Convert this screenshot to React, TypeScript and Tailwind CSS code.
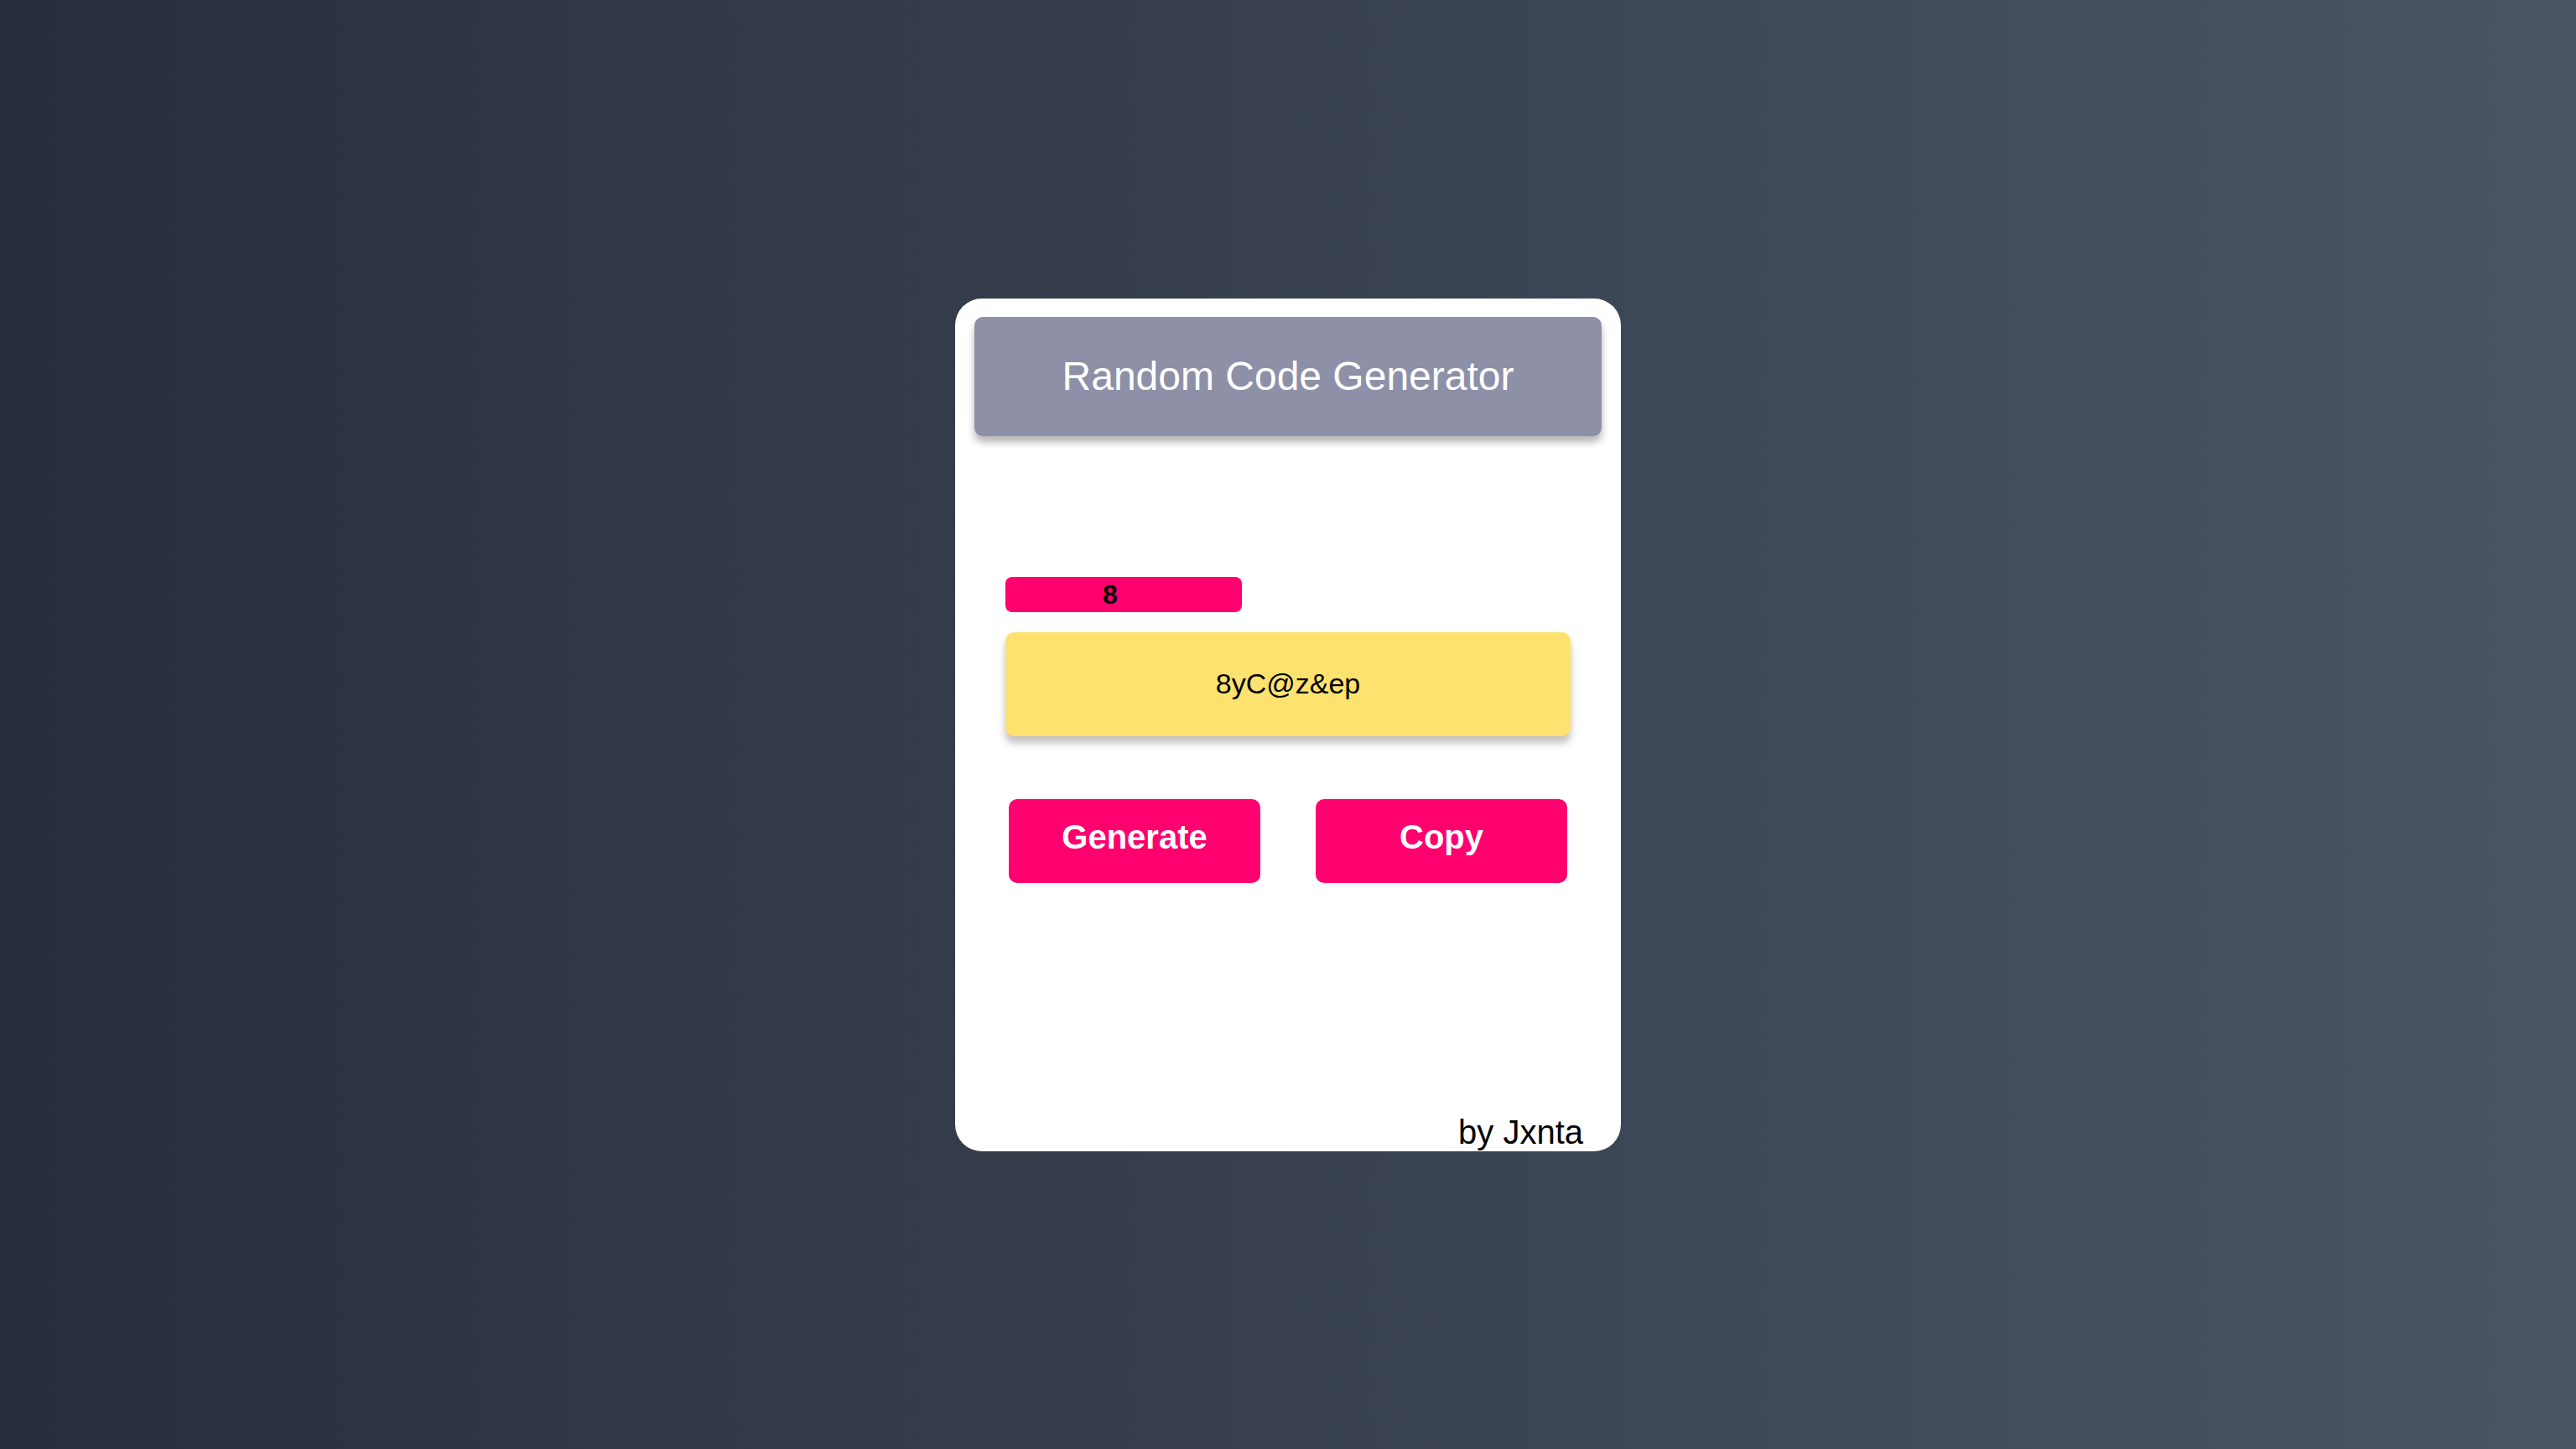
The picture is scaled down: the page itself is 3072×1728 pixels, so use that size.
import React, { useState } from 'react';

const CHARS = 'ABCDEFGHIJKLMNOPQRSTUVWXYZabcdefghijklmnopqrstuvwxyz0123456789!@#$%^&*';

const makeCode = (len: number) => {
  let out = '';
  for (let i = 0; i < len; i++) out += CHARS[Math.floor(Math.random() * CHARS.length)];
  return out;
};

const App = () => {
  const [length] = useState(8);
  const [code, setCode] = useState('8yC@z&ep');

  return (
    <div className="flex h-[1728px] w-full items-center justify-center bg-gradient-to-r from-[#282e3b] to-[#4a5566] font-['Liberation_Sans',Arial,sans-serif]">
      <div className="flex h-[1017px] w-[794px] flex-col rounded-[32px] bg-white pt-[22px]">
        {/* header */}
        <div className="mx-[23px] flex h-[142px] items-center justify-center rounded-[10px] bg-[#8e90a7] shadow-[0_7px_10px_rgba(0,0,0,0.3)]">
          <h1 className="text-[48px] font-normal text-white">Random Code Generator</h1>
        </div>

        <div className="mt-[168px] flex flex-col px-[60px]">
          <div className="flex h-[42px] w-[282px] items-center justify-center rounded-[8px] bg-[#ff006e] pr-[32px] text-[32px] font-bold text-black">
            {length}
          </div>

          <div className="mt-[24px] flex h-[124px] items-center justify-center rounded-[10px] bg-[#fde26f] text-[34px] text-black shadow-[0_8px_10px_rgba(0,0,0,0.25)]">
            {code}
          </div>

          <div className="mt-[75px] flex justify-between px-[4px]">
            <button
              className="flex h-[100px] w-[300px] items-center justify-center rounded-[10px] bg-[#ff006e] pb-[10px] text-[40px] font-bold text-white"
              onClick={() => setCode(makeCode(length))}
            >
              Generate
            </button>
            <button
              className="flex h-[100px] w-[300px] items-center justify-center rounded-[10px] bg-[#ff006e] pb-[10px] text-[40px] font-bold text-white"
              onClick={() => navigator.clipboard?.writeText(code)}
            >
              Copy
            </button>
          </div>
        </div>

        <div className="mt-auto pr-[45px] text-right text-[40px] leading-[46px] text-black">by Jxnta</div>
      </div>
    </div>
  );
};

export default App;
